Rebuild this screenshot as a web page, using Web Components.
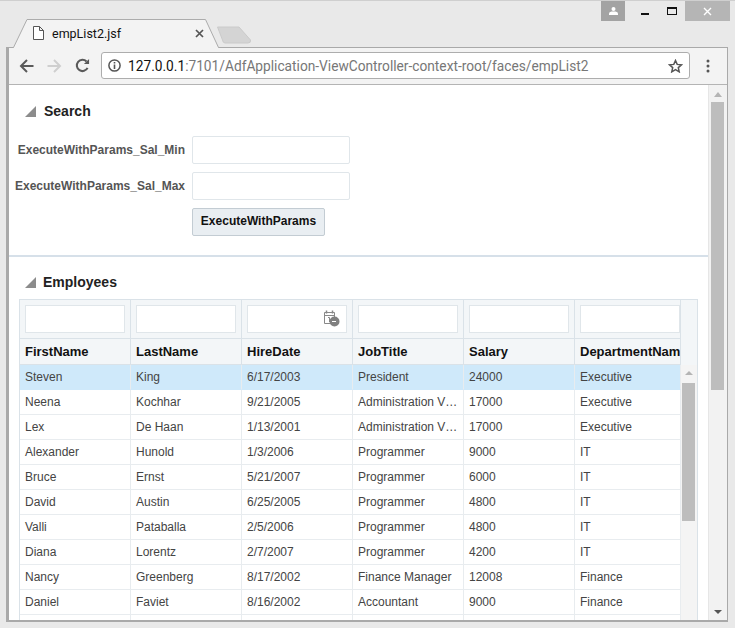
<!DOCTYPE html>
<html lang="en">
<head>
<meta charset="utf-8">
<title>empList2.jsf</title>
<style>
  html, body { margin: 0; height: 100%; overflow: hidden; }
  body { font-family: "Liberation Sans", Arial, sans-serif; }
</style>
</head>
<body>
<browser-window>
  <window-tab slot="tab">empList2.jsf</window-tab>
  <window-controls slot="controls"></window-controls>
  <browser-toolbar slot="toolbar"></browser-toolbar>
  <page-scrollbar slot="scrollbar"></page-scrollbar>

  <panel-section heading="Search">
    <search-form>
      <param-field label="ExecuteWithParams_Sal_Min"></param-field>
      <param-field label="ExecuteWithParams_Sal_Max"></param-field>
      <adf-button>ExecuteWithParams</adf-button>
    </search-form>
  </panel-section>
  <panel-section heading="Employees" divided>
    <emp-table></emp-table>
  </panel-section>
</browser-window>

<script>
class BrowserWindow extends HTMLElement {
  constructor() {
    super();
    this.attachShadow({ mode: "open" });
    this.shadowRoot.innerHTML = /* html */`
    <style>
      :host {
        display: flex;
        flex-direction: column;
        height: 628px;
        box-sizing: border-box;
        background: #e9e9e9;
        border-top: 1px solid #cfcfcf;
      }
      .titlebar { display: flex; height: 46px; flex: none; padding: 0 5px 0 13px; }
      .titlebar ::slotted([slot=controls]) { margin-left: auto; }
      .chrome {
        display: flex;
        flex-direction: column;
        height: 575px;
        margin: 0 7px 0 6px;
        border: solid #a9a9a9;
        border-width: 1px 1px 2px 3px;
        box-sizing: border-box;
        overflow: hidden;
      }
      .view { display: flex; flex: 1; min-height: 0; }
      .page { flex: 1; min-width: 0; background: #fff; overflow: hidden; }
    </style>
    <div class="titlebar">
      <slot name="tab"></slot>
      <slot name="controls"></slot>
    </div>
    <div class="chrome">
      <slot name="toolbar"></slot>
      <div class="view">
        <div class="page"><slot></slot></div>
        <slot name="scrollbar"></slot>
      </div>
    </div>`;
  }
}

class WindowTab extends HTMLElement {
  constructor() {
    super();
    this.attachShadow({ mode: "open" });
    this.shadowRoot.innerHTML = /* html */`
    <style>
      :host {
        display: flex;
        position: relative;
        z-index: 1;
        align-items: center;
        box-sizing: border-box;
        width: 206px;
        height: 29px;
        margin-top: 18px;
        padding: 0 15px 1px 20px;
        font: 12.500px Roboto, "Liberation Sans", sans-serif;
        color: #111;
      }
      .shape { position: absolute; left: 0; top: 0; }
      .newtab { position: absolute; left: 204px; top: 7px; }
      .file, .label, .close { position: relative; }
      .file { margin-right: 8px; }
      .close { margin-left: auto; }
    </style>
    <svg class="shape" width="206" height="29" viewBox="0 0 206 29">
      <path d="M0 29 L1 28 L14 .5 H192.500 L205.500 29 Z" fill="#f3f3f3"/>
      <path d="M0 28.500 H.5 L14 .5 H192.500 L205.500 28.500" fill="none" stroke="#acacac"/>
    </svg>
    <svg class="newtab" width="35" height="18" viewBox="0 0 35 18">
      <path d="M.5 1 H22 L33.500 14 Q34 17 31 17 H8 Q6 17 5.500 14 Z" fill="#d4d4d4" stroke="#cacaca"/>
    </svg>
    <svg class="file" width="11" height="14" viewBox="0 0 11 14">
      <path d="M.5 .5 H6.500 L10.500 4.500 V13.500 H.5 Z M6.500 .5 V4.500 H10.500" fill="#fff" stroke="#555"/>
    </svg>
    <span class="label"><slot></slot></span>
    <svg class="close" width="9" height="9" viewBox="0 0 9 9">
      <path d="M1 1 L8 8 M8 1 L1 8" stroke="#555" stroke-width="1.700"/>
    </svg>`;
  }
}

class WindowControls extends HTMLElement {
  constructor() {
    super();
    this.attachShadow({ mode: "open" });
    this.shadowRoot.innerHTML = /* html */`
    <style>
      :host { display: flex; height: 20px; }
      .user { width: 24px; background: #a3a3a3; display: grid; place-items: center; }
      .min { width: 8px; height: 2px; background: #111; margin: 12px 18px 0 16px; }
      .max { width: 8px; height: 5px; border: 1px solid #111; border-top-width: 2px; margin: 6px 8px 0 0; }
      .close { width: 45px; background: #b5b5b5; display: grid; place-items: center; }
    </style>
    <div class="user">
      <svg width="9" height="8" viewBox="0 0 9 8">
        <circle cx="4.500" cy="2" r="2" fill="#fff"/>
        <path d="M0 6.500 Q0 5 2.500 4.500 H6.500 Q9 5 9 6.500 V8 H0 Z" fill="#fff"/>
      </svg>
    </div>
    <div class="min"></div>
    <div class="max"></div>
    <div class="close">
      <svg width="9" height="9" viewBox="0 0 9 9">
        <path d="M1 1 L8 8 M8 1 L1 8" stroke="#fff" stroke-width="1.400"/>
      </svg>
    </div>`;
  }
}

class BrowserToolbar extends HTMLElement {
  constructor() {
    super();
    this.attachShadow({ mode: "open" });
    this.shadowRoot.innerHTML = /* html */`
    <style>
      :host {
        display: flex;
        align-items: center;
        flex: none;
        box-sizing: border-box;
        height: 37px;
        padding: 0 17px 1px 10px;
        background: #f3f3f3;
        border-bottom: 1px solid #b4b4b4;
      }
      svg { display: block; flex: none; }
      .nav { margin-right: 13px; }
      .nav:nth-of-type(3) { margin-right: 11px; }
      .address {
        display: flex;
        align-items: center;
        flex: 1;
        height: 27px;
        box-sizing: border-box;
        margin-right: 16px;
        padding: 0 6px 0 6px;
        background: #fff;
        border: 1px solid #adadad;
        border-radius: 3px;
      }
      .url {
        flex: 1;
        margin-left: 7px;
        font: 13.730px Roboto, "Liberation Sans", sans-serif;
        color: #777;
        white-space: nowrap;
      }
      .url b { font-weight: 400; color: #111; }
    </style>
    <svg class="nav" width="15" height="14" viewBox="0 0 15 14">
      <path d="M14.500 7 H2.500 M8 1 L2 7 L8 13" fill="none" stroke="#5a5a5a" stroke-width="2"/>
    </svg>
    <svg class="nav" width="15" height="14" viewBox="0 0 15 14">
      <path d="M.5 7 H12.500 M7 1 L13 7 L7 13" fill="none" stroke="#cfcfcf" stroke-width="2"/>
    </svg>
    <svg class="nav" width="15" height="15" viewBox="0 0 16 16">
      <path d="M13.400 10.500 A6 6 0 1 1 12.300 3.800" fill="none" stroke="#5a5a5a" stroke-width="2.200"/>
      <path d="M9.500 6.500 H15 V1 Z" fill="#5a5a5a"/>
    </svg>
    <div class="address">
      <svg width="13" height="13" viewBox="0 0 13 13">
        <circle cx="6.500" cy="6.500" r="5.600" fill="none" stroke="#555" stroke-width="1.500"/>
        <path d="M6.500 5.500 V10 M6.500 3 V4.500" stroke="#555" stroke-width="1.600"/>
      </svg>
      <span class="url"><b>127.0.0.1</b>:7101/AdfApplication-ViewController-context-root/faces/empList2</span>
      <svg width="15" height="14" viewBox="0 0 15 14">
        <path d="M7.500 1.500 L9.200 5.400 L13.500 5.800 L10.300 8.600 L11.200 12.800 L7.500 10.600 L3.800 12.800 L4.700 8.600 L1.500 5.800 L5.800 5.400 Z" fill="none" stroke="#555" stroke-width="1.500"/>
      </svg>
    </div>
    <svg width="4" height="14" viewBox="0 0 4 14">
      <circle cx="2" cy="2" r="1.500" fill="#555"/>
      <circle cx="2" cy="7" r="1.500" fill="#555"/>
      <circle cx="2" cy="12" r="1.500" fill="#555"/>
    </svg>`;
  }
}

class PageScrollbar extends HTMLElement {
  constructor() {
    super();
    this.attachShadow({ mode: "open" });
    this.shadowRoot.innerHTML = /* html */`
    <style>
      :host {
        display: flex;
        flex-direction: column;
        flex: none;
        width: 19px;
        box-sizing: border-box;
        padding: 0 3px 0 2px;
        background: #f2f2f2;
        border-left: 1px solid #e6e6e6;
      }
      .up, .down {
        width: 0;
        height: 0;
        margin: 7px auto 5px;
        border: 4px solid transparent;
        border-top: 0;
        border-bottom: 5px solid #b4b4b4;
      }
      .thumb { height: 288px; background: #bdbdbd; }
      .down {
        margin: auto auto 6px;
        border-bottom: 0;
        border-top: 4px solid #555;
      }
    </style>
    <div class="up"></div>
    <div class="thumb"></div>
    <div class="down"></div>`;
  }
}

class PanelSection extends HTMLElement {
  constructor() {
    super();
    this.attachShadow({ mode: "open" });
    this.shadowRoot.innerHTML = /* html */`
    <style>
      :host { display: block; padding: 17px 0 19px; }
      :host([divided]) { padding: 16px 10px 0; border-top: 2px solid #d6e0e9; }
      h2 {
        display: flex;
        align-items: center;
        gap: 8px;
        height: 18px;
        margin: 0 0 16px 16px;
        font: bold 14px "Liberation Sans", Arial, sans-serif;
        color: #222;
      }
      :host([divided]) h2 { margin: 0 0 8px 6px; gap: 7px; }
      svg { display: block; }
    </style>
    <h2>
      <svg width="11" height="11" viewBox="0 0 11 11"><path d="M11 0 V11 H0 Z" fill="#8c8c8c"/></svg>
      <span class="text"></span>
    </h2>
    <slot></slot>`;
  }

  connectedCallback() {
    this.shadowRoot.querySelector(".text").textContent = this.getAttribute("heading");
  }
}

class SearchForm extends HTMLElement {
  constructor() {
    super();
    this.attachShadow({ mode: "open" });
    this.shadowRoot.innerHTML = /* html */`
    <style>
      :host { display: flex; flex-direction: column; gap: 8px; }
    </style>
    <slot></slot>`;
  }
}

class ParamField extends HTMLElement {
  constructor() {
    super();
    this.attachShadow({ mode: "open" });
    this.shadowRoot.innerHTML = /* html */`
    <style>
      :host { display: flex; align-items: center; gap: 7px; }
      label {
        width: 176px;
        text-align: right;
        white-space: nowrap;
        font: bold 12px "Liberation Sans", Arial, sans-serif;
        color: #555;
      }
      input {
        width: 158px;
        height: 28px;
        box-sizing: border-box;
        margin: 0;
        border: 1px solid #e0e6ea;
        border-radius: 2px;
        background: #fff;
      }
    </style>
    <label></label>
    <input type="text">`;
  }

  connectedCallback() {
    this.shadowRoot.querySelector("label").textContent = this.getAttribute("label");
  }
}

class AdfButton extends HTMLElement {
  constructor() {
    super();
    this.attachShadow({ mode: "open" });
    this.shadowRoot.innerHTML = /* html */`
    <style>
      :host { display: block; padding-left: 183px; }
      button {
        display: block;
        width: 133px;
        height: 28px;
        box-sizing: border-box;
        padding: 0 0 2px;
        background: #e9eef2;
        border: 1px solid #c3ccd3;
        border-radius: 2px;
        font: bold 12px "Liberation Sans", Arial, sans-serif;
        color: #111;
      }
    </style>
    <button type="button"><slot></slot></button>`;
  }
}

class EmpTable extends HTMLElement {
  static get columns() {
    return ["FirstName", "LastName", "HireDate", "JobTitle", "Salary", "DepartmentNam"];
  }

  static get rows() {
    return [
      ["Steven", "King", "6/17/2003", "President", "24000", "Executive"],
      ["Neena", "Kochhar", "9/21/2005", "Administration V…", "17000", "Executive"],
      ["Lex", "De Haan", "1/13/2001", "Administration V…", "17000", "Executive"],
      ["Alexander", "Hunold", "1/3/2006", "Programmer", "9000", "IT"],
      ["Bruce", "Ernst", "5/21/2007", "Programmer", "6000", "IT"],
      ["David", "Austin", "6/25/2005", "Programmer", "4800", "IT"],
      ["Valli", "Pataballa", "2/5/2006", "Programmer", "4800", "IT"],
      ["Diana", "Lorentz", "2/7/2007", "Programmer", "4200", "IT"],
      ["Nancy", "Greenberg", "8/17/2002", "Finance Manager", "12008", "Finance"],
      ["Daniel", "Faviet", "8/16/2002", "Accountant", "9000", "Finance"],
      ["", "", "", "", "", ""]
    ];
  }

  static get styles() {
    return /* css */`
      :host {
        display: block;
        width: 679px;
        --tracks: repeat(5, 111px) 106px;
        font: 12px "Liberation Sans", Arial, sans-serif;
        color: #444;
      }
      .head {
        display: grid;
        grid-template-columns: var(--tracks) 1fr;
        background: #f3f6f8;
        border: 1px solid #dae2e8;
        border-bottom: 0;
      }
      .filter {
        position: relative;
        box-sizing: border-box;
        height: 39px;
        padding: 5px;
        border-right: 1px solid #dae2e8;
        border-bottom: 1px solid #dae2e8;
      }
      .filter:nth-child(6) { padding-right: 0; }
      .filter input {
        display: block;
        width: 100%;
        height: 28px;
        box-sizing: border-box;
        margin: 0;
        background: #fff;
        border: 1px solid #e0e6ea;
      }
      .calendar { position: absolute; right: 12px; top: 10px; }
      .title {
        box-sizing: border-box;
        height: 26px;
        padding: 5px 0 0 5px;
        overflow: hidden;
        white-space: nowrap;
        font: bold 13px/15px "Liberation Sans", Arial, sans-serif;
        color: #111;
        border-right: 1px solid #dae2e8;
        border-bottom: 1px solid #dae2e8;
      }
      .corner { grid-row: 1 / span 2; grid-column: 7; }
      .body { display: flex; border-left: 1px solid #dae2e8; }
      .rows { display: grid; grid-template-columns: var(--tracks); align-self: flex-start; }
      .row { display: contents; }
      .cell {
        box-sizing: border-box;
        height: 25px;
        padding: 5px 0 0 5px;
        line-height: 14px;
        white-space: nowrap;
        overflow: hidden;
        border-right: 1px solid #e8ecef;
        border-bottom: 1px solid #e8ecef;
      }
      .row.selected .cell { background: #cfe9fa; border-bottom-color: #cfe9fa; }
      .bar {
        display: flex;
        flex-direction: column;
        flex: 1;
        height: 258px;
        box-sizing: border-box;
        padding: 0 2px 0 1px;
        background: #f4f4f4;
        border-right: 1px solid #dae2e8;
      }
      .up {
        width: 0;
        height: 0;
        margin: 6px auto 8px;
        border: 4px solid transparent;
        border-top: 0;
        border-bottom: 4px solid #b4b4b4;
      }
      .thumb { height: 138px; background: #bdbdbd; }
    `;
  }

  constructor() {
    super();
    this.attachShadow({ mode: "open" });
  }

  connectedCallback() {
    this.render();
  }

  render() {
    const filters = EmpTable.columns.map((name) => /* html */`
      <div class="filter"><input type="text">${name === "HireDate" ? EmpTable.calendar : ""}</div>`).join("");
    const titles = EmpTable.columns.map((name) => `<div class="title">${name}</div>`).join("");
    const rows = EmpTable.rows.map((row, i) => /* html */`
      <div class="row${i === 0 ? " selected" : ""}">
        ${row.map((value) => `<div class="cell">${value}</div>`).join("")}
      </div>`).join("");

    this.shadowRoot.innerHTML = /* html */`
    <style>${EmpTable.styles}</style>
    <div class="head">
      ${filters}
      <div class="corner"></div>
      ${titles}
    </div>
    <div class="body">
      <div class="rows">${rows}</div>
      <div class="bar">
        <div class="up"></div>
        <div class="thumb"></div>
      </div>
    </div>`;
  }

  static get calendar() {
    return /* html */`
      <svg class="calendar" width="17" height="17" viewBox="0 0 17 17">
        <path d="M1.500 2.500 H11.500 V13.500 H1.500 Z M1.500 5.500 H11.500" fill="#fff" stroke="#888"/>
        <path d="M3.500 .5 V3.500 M9.500 .5 V3.500" stroke="#888" stroke-width="1.500"/>
        <path d="M5 7.500 H6.500 V12" fill="none" stroke="#888"/>
        <circle cx="11.500" cy="11.500" r="5" fill="#808080"/>
        <path d="M9 11.500 H13" stroke="#fff"/>
      </svg>`;
  }
}

customElements.define("browser-window", BrowserWindow);
customElements.define("window-tab", WindowTab);
customElements.define("window-controls", WindowControls);
customElements.define("browser-toolbar", BrowserToolbar);
customElements.define("page-scrollbar", PageScrollbar);
customElements.define("panel-section", PanelSection);
customElements.define("search-form", SearchForm);
customElements.define("param-field", ParamField);
customElements.define("adf-button", AdfButton);
customElements.define("emp-table", EmpTable);
</script>
</body>
</html>
